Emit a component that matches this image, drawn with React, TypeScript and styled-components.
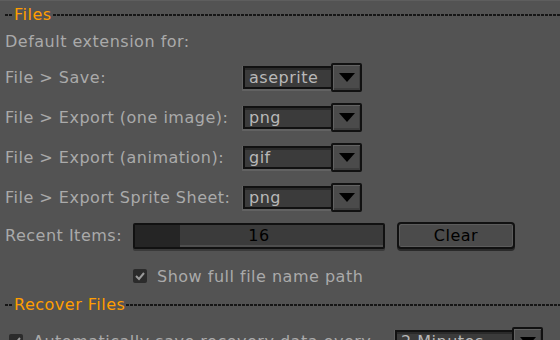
import styled, { createGlobalStyle } from "styled-components"

const Colors = {
    Bg: "#535353",
    Text: "#aaaaaa",
    Title: "#ff9e00",
    Border: "#111111",
    Field: "#3b3b3b",
    FieldShade: "#2a2a2a",
    Button: "#4b4b4b",
    Rim: "#626262",
}

const GlobalStyle = createGlobalStyle`
    html, body {
        margin: 0;
        padding: 0;
        background: ${Colors.Bg};
        overflow: hidden;
    }
    body {
        font-family: "DejaVu Sans", "Liberation Sans", sans-serif;
        font-size: 16px;
        letter-spacing: 0.5px;
        color: ${Colors.Text};
    }
`

interface ComboProps {
    value: string
    width?: number
}

function Combo({ value, width = 88 }: ComboProps) {
    return (
        <ComboBox>
            <ComboField width={width}>{value}</ComboField>
            <ComboButton>
                <svg width="16" height="10" viewBox="0 0 16 10">
                    <path d="M0 0 H16 L8 9 Z" fill="#000" />
                </svg>
            </ComboButton>
        </ComboBox>
    )
}

function Check() {
    return (
        <CheckBox>
            <svg width="12" height="12" viewBox="0 0 12 12">
                <path
                    d="M2 6 L5 9 L10 3"
                    stroke="#9a9a9a"
                    strokeWidth="2"
                    fill="none"
                />
            </svg>
        </CheckBox>
    )
}

const exports = [
    { label: "File > Save:", value: "aseprite" },
    { label: "File > Export (one image):", value: "png" },
    { label: "File > Export (animation):", value: "gif" },
    { label: "File > Export Sprite Sheet:", value: "png" },
]

export default function App() {
    const recent = 16
    const maxRecent = 64

    return (
        <Page>
            <GlobalStyle />
            <SectionTitle>
                <Dash width={8} />
                <TitleText>Files</TitleText>
                <Dash />
            </SectionTitle>
            <Note>Default extension for:</Note>

            <Rows>
                {exports.map((e) => (
                    <Row key={e.label}>
                        <Label width={238}>{e.label}</Label>
                        <Combo value={e.value} />
                    </Row>
                ))}
            </Rows>

            <RecentRow>
                <Label width={128}>Recent Items:</Label>
                <Slider>
                    <SliderFill
                        style={{ width: `${(recent / maxRecent) * 100 * 0.72}%` }}
                    />
                    <SliderValue>{recent}</SliderValue>
                </Slider>
                <Button>Clear</Button>
            </RecentRow>

            <CheckRow indent={128}>
                <Check />
                <span>Show full file name path</span>
            </CheckRow>

            <SectionTitle>
                <Dash width={8} />
                <TitleText>Recover Files</TitleText>
                <Dash />
            </SectionTitle>

            <AutoRow>
                <Check />
                <Label width={352}>Automatically save recovery data every</Label>
                <Combo value="2 Minutes" width={117} />
            </AutoRow>
        </Page>
    )
}

const Page = styled.div`
    width: 560px;
    height: 340px;
    box-sizing: border-box;
    border-top: 1px solid #5e5e5e;
    padding: 4px 0 0 5px;
    display: flex;
    flex-direction: column;
    overflow: hidden;
`

const SectionTitle = styled.div`
    display: flex;
    align-items: center;
    height: 20px;
    flex: none;
`

const Dash = styled.div<{ width?: number }>`
    height: 2px;
    ${({ width }) => (width ? `width: ${width}px;` : "flex: 1;")}
    background: repeating-linear-gradient(
        to right,
        #161616 0 3px,
        transparent 3px 4px
    );
`

const TitleText = styled.span`
    color: ${Colors.Title};
    padding: 0 1px;
    line-height: 20px;
`

const Note = styled.div`
    margin-top: 7px;
    line-height: 20px;
`

const Rows = styled.div`
    display: flex;
    flex-direction: column;
    gap: 12px;
    margin-top: 11px;
`

const Row = styled.div`
    display: flex;
    align-items: center;
    height: 28px;
`

const Label = styled.span<{ width: number }>`
    width: ${({ width }) => width}px;
    flex: none;
    white-space: nowrap;
`

const ComboBox = styled.div`
    display: flex;
    align-items: center;
`

const ComboField = styled.div<{ width: number }>`
    width: ${({ width }) => width}px;
    height: 23px;
    box-sizing: border-box;
    border: 2px solid ${Colors.Border};
    border-right: none;
    background: ${Colors.Field};
    box-shadow: inset 0 2px 0 ${Colors.FieldShade}, 0 1px 0 1px ${Colors.Rim};
    color: #b8b8b8;
    padding: 1px 0 0 4px;
    line-height: 18px;
    white-space: nowrap;
    overflow: hidden;
`

const ComboButton = styled.div`
    width: 31px;
    height: 29px;
    box-sizing: border-box;
    border: 2px solid ${Colors.Border};
    border-radius: 2px;
    background: ${Colors.Button};
    box-shadow: inset 1px 1px 0 ${Colors.Rim}, inset -1px -2px 0 #3e3e3e;
    display: flex;
    align-items: center;
    justify-content: center;
    padding-top: 2px;
`

const RecentRow = styled.div`
    display: flex;
    align-items: center;
    height: 28px;
    margin-top: 11px;
`

const Slider = styled.div`
    position: relative;
    width: 252px;
    height: 26px;
    box-sizing: border-box;
    border: 2px solid ${Colors.Border};
    border-radius: 2px;
    background: ${Colors.Field};
    box-shadow: inset 0 -2px 0 #4e4e4e, 0 2px 0 #3a3a3a;
    display: flex;
    overflow: hidden;
`

const SliderFill = styled.div`
    background: #252525;
    height: 100%;
`

const SliderValue = styled.span`
    position: absolute;
    inset: 0;
    display: flex;
    align-items: center;
    justify-content: center;
    color: #000;
    padding-left: 0;
`

const Button = styled.div`
    margin-left: 12px;
    width: 118px;
    height: 27px;
    box-sizing: border-box;
    border: 2px solid ${Colors.Border};
    border-radius: 4px;
    background: ${Colors.Button};
    box-shadow: inset 1px 1px 0 #5c5c5c, inset -1px -1px 0 #5c5c5c,
        0 2px 0 #2a2a2a;
    color: #000;
    display: flex;
    align-items: center;
    justify-content: center;
`

const CheckRow = styled.div<{ indent: number }>`
    display: flex;
    align-items: center;
    gap: 10px;
    height: 20px;
    flex: none;
    margin: 17px 0 9px ${({ indent }) => indent}px;
`

const CheckBox = styled.div`
    width: 14px;
    height: 14px;
    flex: none;
    background: #2b2b2b;
    border-radius: 2px;
    display: flex;
    align-items: center;
    justify-content: center;
`

const AutoRow = styled.div`
    display: flex;
    align-items: center;
    gap: 10px;
    height: 28px;
    flex: none;
    margin: 12px 0 0 4px;
    white-space: nowrap;
`
